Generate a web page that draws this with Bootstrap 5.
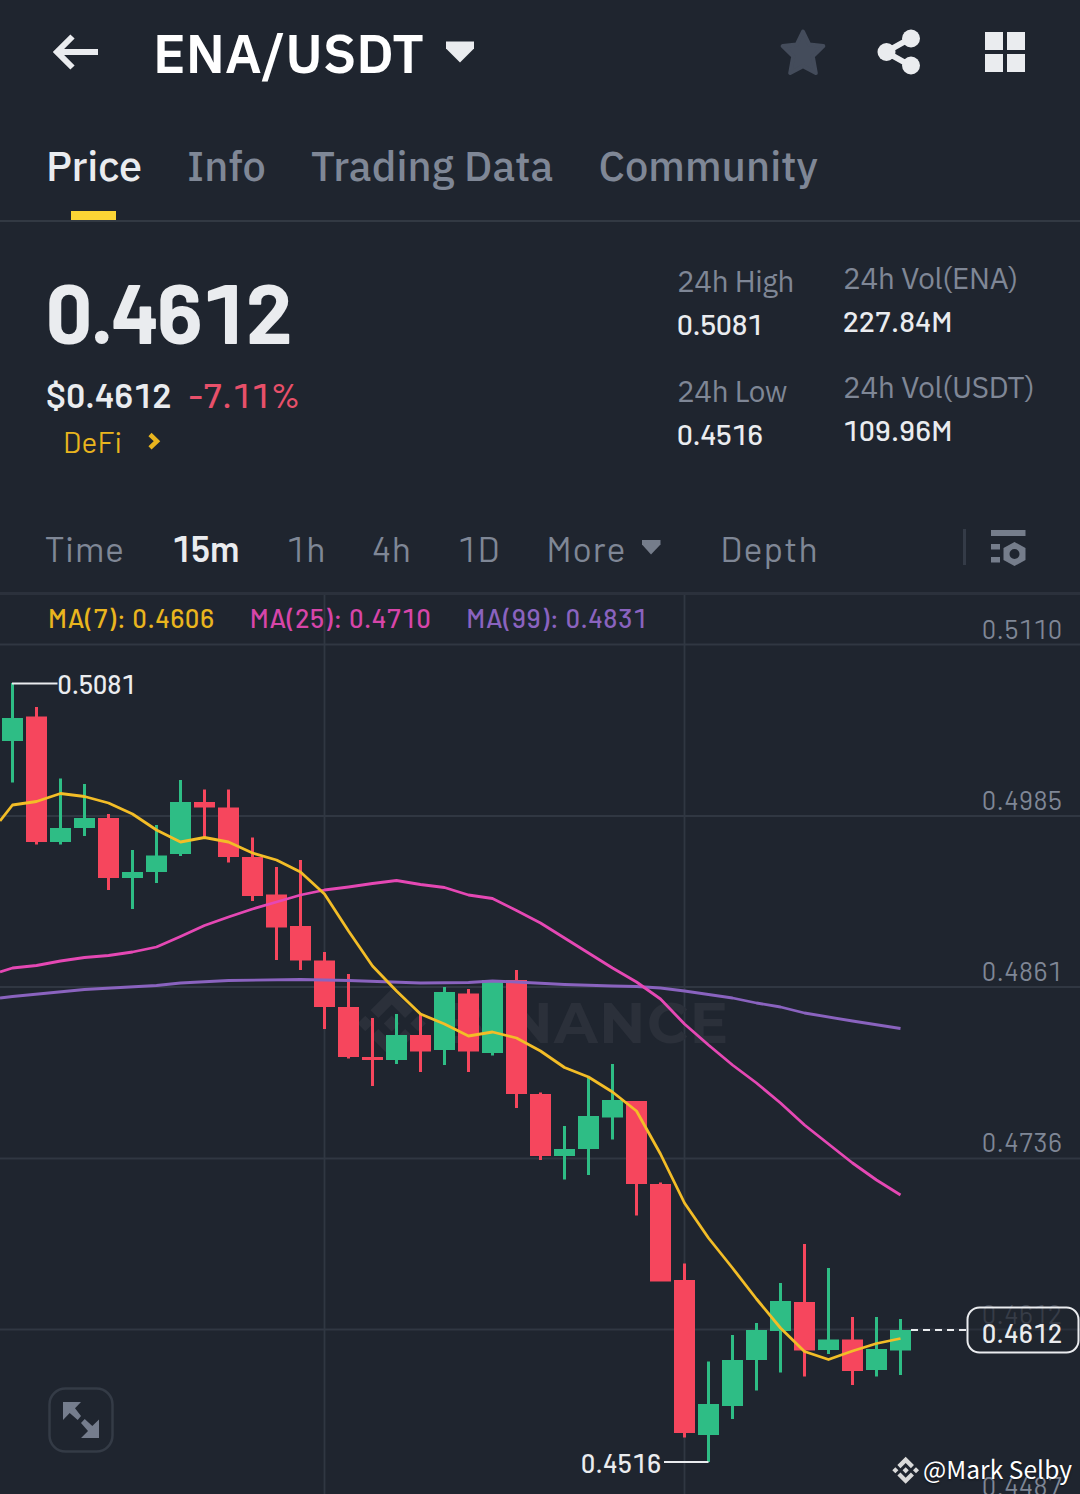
<!DOCTYPE html>
<html lang="en">
<head>
<meta charset="utf-8">
<meta name="viewport" content="width=device-width, initial-scale=1">
<title>ENA/USDT</title>
<link href="https://cdn.jsdelivr.net/npm/bootstrap@5.3.0/dist/css/bootstrap.min.css" rel="stylesheet">
<style>
:root{--bg:#1f252f;--fg:#eaecef;--muted:#7f8796;--line:#323943;--yellow:#e9b51e;--plex:"IBM Plex Sans","Noto Sans",sans-serif;--din:"Barlow","Roboto",sans-serif}
body{background:var(--bg);color:var(--fg);font-family:var(--din);width:1080px;height:1494px;overflow:hidden;font-variant-numeric:tabular-nums}
svg{display:block}
.topbar{height:104px;padding:0 54px 0 51px}
.pair{font:600 54.5px/60px var(--plex);color:#fff;margin-left:54px;padding-top:1px}
.caret-lg{margin-left:22px}
.ico-share{margin-left:51px}
.ico-grid{margin-left:64px}
.tabs{height:118px;padding:30px 0 0 46px;border-bottom:2px solid var(--line);gap:45px;font:500 41.5px/63px var(--plex);color:var(--muted)}
.tabs .nav-link{padding:0;color:var(--muted);font:inherit;letter-spacing:.12px}
.tabs .nav-link.active{color:var(--fg);letter-spacing:-.1px}
.tabs .nav-link.active::after{content:"";display:block;width:45px;height:9px;margin:14px auto 0;background:#fcd535}
.summary{height:284px}
.quote{padding:46px 0 0 46px;width:677px}
.last{font-size:84.5px;line-height:84px;font-weight:700;letter-spacing:-1.3px}
.fiat{font-size:35px;line-height:47px;margin-top:19px;font-weight:600;gap:17px;letter-spacing:.3px}
.down{color:#e8506a;letter-spacing:.5px;font-weight:500}
.tagline{font-size:29.5px;line-height:46px;color:var(--yellow);padding-left:17px;gap:25px;letter-spacing:.3px}
.stats{font-size:29.6px;line-height:42px;font-weight:500;letter-spacing:-.2px}
.stats dt{font:400 29.6px/42px var(--plex);color:var(--muted);letter-spacing:-.4px}
.stats dd{margin:0}
.stats dd+dt{margin-top:26px}
.stats-price{padding-top:38px;width:166px}
.stats-vol{padding-top:35px}
.stats-vol dt{letter-spacing:-.25px}
.stats-vol dd{letter-spacing:.2px}
.stats-vol dd+dt{margin-top:25px}
.intervals{height:86px;padding:0 54px 2px 44.5px;font-size:35.5px;line-height:44px;color:var(--muted);letter-spacing:.9px;gap:46px}
.intervals .on{color:var(--fg);font-weight:600;letter-spacing:0;margin:0 1px}
.more-menu{gap:16px}
.depth{margin-left:13px;letter-spacing:1.2px}
.chart{height:902px}
.ma{left:48px;top:8px;gap:35px;font-size:26.5px;line-height:34px;font-weight:500;letter-spacing:.7px}
.ma7{color:#e9b51e}.ma25{color:#d745a9}.ma99{color:#8a63bf}
.byline{text-shadow:0 1px 2px #0008}
</style>
</head>
<body>
<header class="topbar d-flex align-items-center">
  <svg width="48" height="40" viewBox="51 32 48 40"><path d="M72.500 36.500L57 52l15.500 15.500M58 52h40" fill="none" stroke="#eaecef" stroke-width="6"/></svg>
  <span class="pair">ENA/USDT</span>
  <svg class="caret-lg" width="28" height="22" viewBox="446 42 28 22"><path d="M446 42.500h28v7l-14 14L446 49.500z" fill="#eaecef"/></svg>
  <svg class="ms-auto" width="46" height="48" viewBox="780 29 46 48"><path d="M803 32.500l6.300 13 14 1.600-10.500 10.200 3 16.700-12.800-6.800-12.800 6.800 3-16.700-10.500-10.200 14-1.600z" fill="#444c5b" stroke="#444c5b" stroke-width="4" stroke-linejoin="round"/></svg>
  <svg class="ico-share" width="44" height="48" viewBox="877 28 44 48"><path d="M911 38L886 52l25 14" fill="none" stroke="#eaecef" stroke-width="6"/><g fill="#eaecef"><circle cx="911" cy="38.500" r="9"/><circle cx="886.500" cy="52" r="9"/><circle cx="911" cy="65.500" r="9"/></g></svg>
  <svg class="ico-grid" width="41" height="40" viewBox="985 32 41 40"><path d="M985 32h18v18h-18zM1007 32h18v18h-18zM985 54h18v18h-18zM1007 54h18v18h-18z" fill="#eaecef"/></svg>
</header>
<nav class="tabs nav">
  <a class="nav-link active">Price</a><a class="nav-link">Info</a><a class="nav-link">Trading Data</a><a class="nav-link">Community</a>
</nav>
<section class="summary d-flex">
  <div class="quote">
    <div class="last">0.4612</div>
    <div class="fiat d-flex"><span>$0.4612</span><span class="down">-7.11%</span></div>
    <div class="tagline d-flex align-items-center"><span>DeFi</span><svg width="14" height="18" viewBox="147 433 14 18"><path d="M150 435.500l7 6.700-7 6.700" fill="none" stroke="#e9b51e" stroke-width="4.500"/></svg></div>
  </div>
  <dl class="stats stats-price mb-0">
    <dt>24h High</dt><dd>0.5081</dd>
    <dt>24h Low</dt><dd>0.4516</dd>
  </dl>
  <dl class="stats stats-vol mb-0">
    <dt>24h Vol(ENA)</dt><dd>227.84M</dd>
    <dt>24h Vol(USDT)</dt><dd>109.96M</dd>
  </dl>
</section>
<div class="intervals d-flex align-items-center">
  <span>Time</span><span class="on">15m</span><span>1h</span><span>4h</span><span>1D</span>
  <span class="more-menu d-flex align-items-center">More<svg width="19" height="20" viewBox="642 538 19 20"><path d="M642 540h18.500v4.500L651 554.500l-9-10z" fill="#757d8b"/></svg></span>
  <span class="depth">Depth</span>
  <svg class="ms-auto" width="64" height="40" viewBox="962 528 64 40"><path d="M964.500 529v36" stroke="#343b47" stroke-width="3"/><path d="M991 530h34.500v6H991zM991 544h9v5.500h-9zM991 557h9v5.500h-9z" fill="#757d8b"/><path fill-rule="evenodd" d="M1014.500 542l11 6v12l-11 6-11-6v-12zM1014.500 549a5 5 0 1 0 0 10 5 5 0 0 0 0-10z" fill="#757d8b"/></svg>
</div>
<main class="chart position-relative">
  <svg id="plot" width="1080" height="902" viewBox="0 592 1080 902">
    <path d="M0 593.500h1080" stroke="#2b313c" stroke-width="3"/>
    <path d="M0 644.500h1080M0 816h1080M0 987h1080M0 1158.500h1080M0 1329.500h1080M324.500 595v899M684.500 595v899" stroke="#303742" stroke-width="1.800"/>
    <g fill="#2b303a">
      <path transform="translate(357.500 989) scale(.545)" d="M38.170 53.200L62.760 28.620l24.600 24.600 14.300-14.310L62.760 0l-38.900 38.900zM0 63.310L14.300 49l14.310 14.310L14.300 77.610zM38.170 73.410L62.760 98l24.600-24.600 14.310 14.290-38.910 38.930-38.900-38.900zM96.900 63.310L111.210 49l14.310 14.310-14.300 14.300zM77.270 63.300L62.760 48.780 48.230 63.300l14.530 14.540z"/>
      <text x="441" y="1043" font-family="Montserrat,Inter,sans-serif" font-weight="700" font-size="57" textLength="287">BINANCE</text>
    </g>
    <g id="candles"></g>
    <g fill="none" stroke-width="2.800" stroke-linejoin="round">
      <polyline stroke="#8a63bf" points="0,998 12.500,996.500 84.500,989.500 156.500,985.500 180.500,983 228.500,980.500 300.500,979.500 348.500,980.500 420.500,983 468.500,982.500 492.500,981 516.500,982 564.500,984.500 612.500,986 636.500,986.500 660.500,988 684.500,991 732.500,998 756.500,1003 780.500,1007 804.500,1013 852.500,1021 900.500,1028.500"/>
      <polyline stroke="#e548b4" points="0,972 12.500,968 36.500,965.500 60.500,961 84.500,957.500 108.500,955.500 132.500,952 156.500,947 180.500,936.500 204.500,925.500 228.500,917 252.500,909 276.500,902 300.500,895 324.500,890 348.500,887 372.500,883.500 396.500,880.500 420.500,884.500 444.500,887.500 468.500,895 492.500,898.500 516.500,910.500 540.500,923 564.500,938 588.500,953 612.500,968 636.500,982 660.500,999 684.500,1024 708.500,1045 732.500,1065 756.500,1083 780.500,1103 804.500,1125 828.500,1144 852.500,1163 876.500,1180 900.500,1195"/>
      <polyline stroke="#f3bd27" points="0,821 12.500,805 36.500,801.500 60.500,793.500 84.500,796.500 108.500,803 132.500,814 156.500,830 180.500,842 204.500,837.500 228.500,842 252.500,853 276.500,860 300.500,872 324.500,894 348.500,931 372.500,966 396.500,991 420.500,1014 444.500,1024 468.500,1036 492.500,1032 516.500,1038 540.500,1051 564.500,1067.500 588.500,1077 612.500,1092 636.500,1111 660.500,1154 684.500,1203 708.500,1238 732.500,1268 756.500,1299 780.500,1328 804.500,1351.500 828.500,1359.500 852.500,1351 876.500,1343.500 900.500,1338.500"/>
    </g>
    <path d="M12 683.500h45.500M664 1462h44.500" stroke="#eaecef" stroke-width="2"/>
    <path d="M911 1330h56" stroke="#eaecef" stroke-width="2" stroke-dasharray="7 5"/>
    <g font-size="26.500" fill="#7f8796">
      <text x="982" y="638.500" textLength="80">0.5110</text><text x="982" y="809.500" textLength="80">0.4985</text><text x="982" y="980.500" textLength="80">0.4861</text><text x="982" y="1151.500" textLength="80">0.4736</text><text x="982" y="1496" textLength="80">0.4487</text>
      <text x="982" y="1323.500" textLength="80" fill="#434955">0.4612</text>
      <rect x="967.500" y="1307.500" width="111" height="45" rx="12" fill="#1f252f" fill-opacity=".35" stroke="#eaecef" stroke-width="2"/>
      <g fill="#eaecef" font-weight="500"><text x="982" y="1343" textLength="80">0.4612</text><text x="57.500" y="693.500" textLength="78">0.5081</text><text x="581" y="1472.500" textLength="80">0.4516</text></g>
    </g>
    <rect x="49.500" y="1388.500" width="63" height="63" rx="16" fill="none" stroke="#343b46" stroke-width="2.500"/>
    <path d="M63 1402h18l-6 6.300 6 7.700-3.300 4-8-7L63 1420zM99 1438H81l7-7-7-8 3.700-4 7.600 7 6.700-6.500z" fill="#757d8d"/>
    <path transform="translate(892.300 1456.800) scale(.213)" fill="#d9d9d9" d="M38.170 53.200L62.760 28.620l24.600 24.600 14.300-14.310L62.760 0l-38.900 38.900zM0 63.310L14.300 49l14.310 14.310L14.300 77.610zM38.170 73.410L62.760 98l24.600-24.600 14.310 14.290-38.910 38.930-38.900-38.900zM96.900 63.310L111.210 49l14.310 14.310-14.300 14.300zM77.270 63.300L62.760 48.780 48.230 63.300l14.530 14.540z"/>
    <text class="byline" x="923" y="1479" textLength="149" font-family="Noto Sans CJK SC,sans-serif" font-size="24.500" fill="#fff">@Mark Selby</text>
  </svg>
  <div class="ma position-absolute d-flex"><span class="ma7">MA(7): 0.4606</span><span class="ma25">MA(25): 0.4710</span><span class="ma99">MA(99): 0.4831</span></div>
</main>
<script src="https://cdn.jsdelivr.net/npm/bootstrap@5.3.0/dist/js/bootstrap.bundle.min.js"></script>
<script>
// wick top, body top, body bottom, wick bottom, rising
const candles=[[683,718,741,782.5,1],[707,716.5,842,844.5,0],[778.5,828,842,844.5,1],[784,818,828,836,1],[814,818,878,890,0],[850,872,878,909,1],[825,855.5,872,883,1],[780,802,854,856,1],[789.5,802,807.5,837,0],[789.5,807.5,857,862.5,0],[837.5,857,896,901,0],[867,894.5,927.5,960,0],[860,926,960.5,970,0],[952,960.5,1007,1029,0],[974,1007,1057,1058.5,0],[1018,1057,1060,1086,0],[1014,1035,1060,1064,1],[1014,1035,1051.5,1072,0],[987,992,1050,1065,1],[989,993.5,1051.5,1072,0],[980,980,1053,1055.5,1],[970,980,1094,1108,0],[1092.5,1094,1156,1160,0],[1126,1149,1156,1179.5,1],[1077,1116,1149,1175,1],[1064,1100,1117.5,1139.5,1],[1101,1101,1184,1215.5,0],[1182.5,1184,1281.5,1281.5,0],[1263.5,1280,1433,1437.5,0],[1361.5,1404,1435,1462,1],[1335,1360,1406,1419,1],[1323,1330,1360,1390.5,1],[1283,1301,1331,1372.5,1],[1244,1302,1350.5,1376.5,0],[1268,1339.5,1350,1354,1],[1317,1339.5,1371,1385,0],[1317,1349,1370,1376.5,1],[1319,1330,1350.5,1375,1]];
document.getElementById('candles').innerHTML=candles.map(([a,b,c,d,up],i)=>{
  const x=12.5+24*i,f=up?'#2ebd85':'#f6465d';
  return `<path fill="${f}" d="M${x-1.5} ${a}h3V${d}h-3zM${x-10.5} ${b}h21V${c}h-21z"/>`}).join('');
</script>
</body>
</html>
